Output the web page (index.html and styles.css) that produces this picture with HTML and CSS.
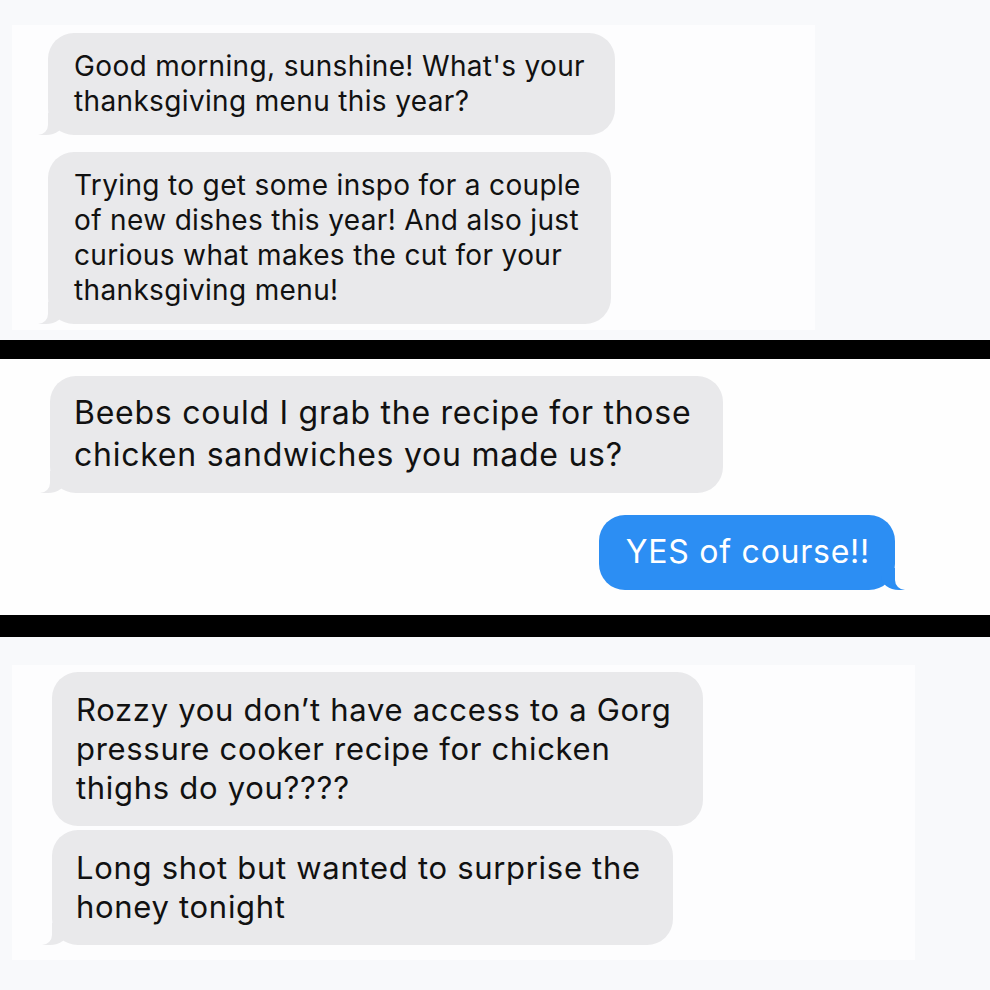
FILE: index.html
```html
<!DOCTYPE html>
<html lang="en">
<head>
  <meta charset="UTF-8">
  <title>Thanksgiving texts</title>
  <link rel="stylesheet" href="styles.css">
</head>
<body>

<div class="collage">

  <section class="panel panel-one">
    <div class="shot">
      <div class="bubble in tail">Good morning, sunshine! What's your<br>thanksgiving menu this year?</div>
      <div class="bubble in tail">Trying to get some inspo for a couple<br>of new dishes this year! And also just<br>curious what makes the cut for your<br>thanksgiving menu!</div>
    </div>
  </section>

  <div class="divider"></div>

  <section class="panel panel-two">
    <div class="shot">
      <div class="bubble in tail">Beebs could I grab the recipe for those<br>chicken sandwiches you made us?</div>
      <div class="bubble out tail">YES of course!!</div>
    </div>
  </section>

  <div class="divider thick"></div>

  <section class="panel panel-three">
    <div class="shot">
      <div class="bubble in">Rozzy you don’t have access to a Gorg<br>pressure cooker recipe for chicken<br>thighs do you????</div>
      <div class="bubble in tail">Long shot but wanted to surprise the<br>honey tonight</div>
    </div>
  </section>

</div>

</body>
</html>
```

FILE: styles.css
```css
body {
  margin: 0;
  background: #f8f9fb;
  font-family: Inter, "Liberation Sans", Arial, sans-serif;
  color: #111;
}
.collage {
  width: 990px;
}
.panel {
  box-sizing: border-box;
  background: #f8f9fb;
}
.shot {
  --bg: #fdfdfe;
  background: var(--bg);
  display: flex; flex-direction: column;
  align-items: flex-start;
  box-sizing: border-box;
}
.divider {
  height: 19px; background: #000;
}
.divider.thick {
  height: 22px;
}

/* bubbles */
.bubble {
  position: relative;
  background: #e9e9eb;
  border-radius: 26px;
}
.bubble.out {
  background: #2c8ef3; color: #fff;
}
.bubble.in.tail::before {
  content: ""; position: absolute; left: -10px; bottom: 0;
  width: 26px; height: 22px; background: #e9e9eb;
  border-bottom-right-radius: 18px 14px;
}
.bubble.in.tail::after {
  content: ""; position: absolute; left: -13px; bottom: 0;
  width: 13px; height: 23px; background: var(--bg);
  border-bottom-right-radius: 10px;
}
.bubble.out.tail::before {
  content: ""; position: absolute; right: -12px; bottom: 0;
  width: 26px; height: 22px; background: #2c8ef3;
  border-bottom-left-radius: 18px 14px;
}
.bubble.out.tail::after {
  content: ""; position: absolute; right: -15px; bottom: 0;
  width: 15px; height: 23px; background: var(--bg);
  border-bottom-left-radius: 10px;
}

/* panel one */
.panel-one {
  height: 340px;
  padding: 25px 175px 10px 12px;
}
.panel-one .shot {
  height: 305px;
  padding: 8px 0 0 36px;
  gap: 17px;
}
.panel-one .bubble {
  font-size: 28px; line-height: 35px;
  letter-spacing: 0.35px;
  padding: 16px 30px 16px 26px;
}

/* panel two */
.panel-two {
  height: 256px;
  background: #fefefe;
  padding: 0 10px;
}
.panel-two .shot {
  --bg: #fefefe;
  height: 256px;
  padding: 17px 85px 0 40px;
  gap: 22px;
}
.panel-two .bubble {
  font-size: 32px; line-height: 42px;
  letter-spacing: 0.75px;
  padding: 16px 32px 17px 24px;
}
.panel-two .bubble.out {
  align-self: flex-end;
  padding: 16px 25px 17px 27px;
}

/* panel three */
.panel-three {
  height: 353px;
  padding: 28px 75px 30px 12px;
}
.panel-three .shot {
  height: 295px;
  padding: 7px 0 0 40px;
  gap: 4px;
}
.panel-three .bubble {
  font-size: 31px; line-height: 39px;
  letter-spacing: 0.7px;
  padding: 18px 32px 19px 24px;
}
```
